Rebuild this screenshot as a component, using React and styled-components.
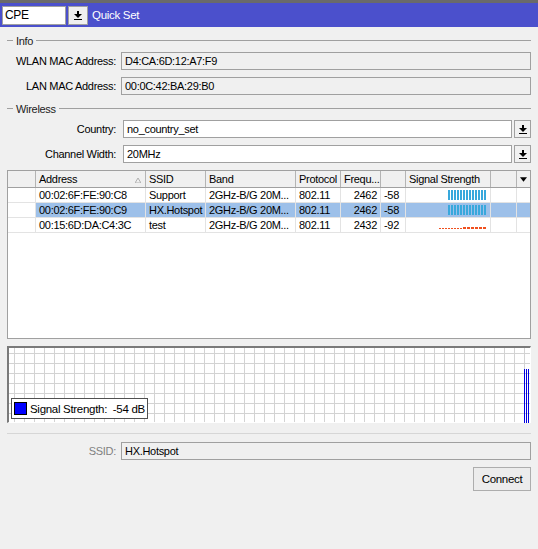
import React from 'react';
import styled, { createGlobalStyle } from 'styled-components';

const GlobalStyle = createGlobalStyle`
  html, body {
    margin: 0;
    padding: 0;
    background: #f0f0f0;
    min-height: 100%;
  }
  body {
    font-family: "Liberation Sans", Arial, sans-serif;
    font-size: 11px;
    letter-spacing: -0.3px;
    color: #000;
  }
`;

const Window = styled.div`
  width: 538px;
  height: 549px;
  background: #f0f0f0;
  display: flex;
  flex-direction: column;
`;

const TopBar = styled.div`
  height: 24px;
  border-top: 3px solid #6a6a6a;
  background: #4b50cc;
  display: flex;
  align-items: center;
  padding-left: 2px;
  gap: 2px;
`;

const ModeSelect = styled.div`
  box-sizing: border-box;
  width: 64px;
  height: 19px;
  background: #fff;
  border: 1px solid #a0a0a0;
  padding-left: 2px;
  line-height: 17px;
  font-size: 12px;
`;

const DropButton = styled.div`
  box-sizing: border-box;
  width: ${(p) => p.$w || 20}px;
  height: ${(p) => p.$h || 19}px;
  background: #f0f0f0;
  border: 1px solid #a0a0a0;
  display: flex;
  align-items: center;
  justify-content: center;
  flex-shrink: 0;
`;

const Title = styled.div`
  color: #fff;
  margin-left: 2px;
  font-size: 11.5px;
`;

const Body = styled.div`
  padding: 0 7px;
  display: flex;
  flex-direction: column;
`;

const GroupHeader = styled.div`
  margin-top: ${(p) => p.$mt}px;
  height: 13px;
  display: flex;
  align-items: center;
  gap: 3px;
  color: #222;
  &::before {
    content: '';
    width: 6px;
    height: 1px;
    background: #a0a0a0;
  }
  &::after {
    content: '';
    flex: 1;
    height: 1px;
    background: #a0a0a0;
  }
`;

const FormRow = styled.div`
  margin-top: ${(p) => p.$mt}px;
  height: 18px;
  display: grid;
  grid-template-columns: 114px 1fr ${(p) => (p.$withButton ? '17px' : '')};
  column-gap: ${(p) => (p.$withButton ? '2px' : '0')};
  align-items: center;
`;

const Label = styled.div`
  text-align: right;
  padding-right: 5px;
  color: ${(p) => (p.$disabled ? '#808080' : '#000')};
  white-space: nowrap;
`;

const Field = styled.div`
  box-sizing: border-box;
  height: 18px;
  line-height: 16px;
  border: 1px solid #a0a0a0;
  background: ${(p) => (p.$editable ? '#fff' : '#f0f0f0')};
  padding-left: 3px;
  white-space: nowrap;
  overflow: hidden;
`;

const Table = styled.div`
  margin-top: 7px;
  height: 169px;
  box-sizing: border-box;
  border: 1px solid #a0a0a0;
  background: #fff;
  display: flex;
  flex-direction: column;
`;

const COLS = '28px 110px 60px 90px 45px 40px 25px 85px 26px 1fr';

const HeadRow = styled.div`
  display: grid;
  grid-template-columns: ${COLS};
  height: 17px;
  line-height: 16px;
  background: #f0f0f0;
  border-bottom: 1px solid #a0a0a0;
  box-sizing: border-box;
`;

const HeadCell = styled.div`
  position: relative;
  padding: 0 3px;
  border-right: 1px solid #b4b4b4;
  white-space: nowrap;
  overflow: hidden;
  display: flex;
  align-items: center;
  justify-content: ${(p) => (p.$center ? 'center' : 'flex-start')};
  &:last-child {
    border-right: none;
  }
`;

const SortMark = styled.svg`
  position: absolute;
  right: 4px;
  top: 7px;
`;

const DataRow = styled.div`
  display: grid;
  grid-template-columns: ${COLS};
  height: 15px;
  line-height: 14px;
  box-sizing: border-box;
  border-bottom: 1px solid #e3e3e3;
`;

const DataCell = styled.div`
  padding: 0 3px;
  border-right: 1px solid #e3e3e3;
  background: ${(p) => (p.$selected ? '#9dc0e9' : '#fff')};
  white-space: nowrap;
  overflow: hidden;
  text-align: ${(p) => p.$align || 'left'};
  display: flex;
  align-items: center;
  justify-content: ${(p) => (p.$align === 'right' ? 'flex-end' : 'flex-start')};
  &:last-child {
    border-right: none;
  }
`;

const Graph = styled.div`
  position: relative;
  margin-top: 7px;
  height: 77px;
  box-sizing: border-box;
  border-top: 2px solid #7a7a7a;
  border-left: 2px solid #7a7a7a;
  border-right: 1px solid #fff;
  border-bottom: 1px solid #fff;
  background-color: #fff;
  background-image: linear-gradient(to right, #d3d3d3 1px, transparent 1px),
    linear-gradient(to bottom, #d3d3d3 1px, transparent 1px);
  background-size: 10px 10px;
  background-position: 5px 5px;
`;

const Legend = styled.div`
  position: absolute;
  left: 2px;
  top: 50px;
  width: 137px;
  height: 21px;
  box-sizing: border-box;
  border: 1px solid #505050;
  background: #fff;
  display: flex;
  align-items: center;
  padding-left: 2px;
  gap: 3px;
  font-size: 11.5px;
`;

const Swatch = styled.div`
  width: 13px;
  height: 13px;
  box-sizing: border-box;
  background: #0000ff;
  border: 1px solid #000;
`;

const Bars = styled.svg`
  position: absolute;
  right: 0;
  top: 21px;
`;

const Separator = styled.div`
  margin-top: 10px;
  height: 1px;
  background: #d6d6d6;
`;

const ButtonRow = styled.div`
  margin-top: 7px;
  display: flex;
  justify-content: flex-end;
`;

const Button = styled.div`
  box-sizing: border-box;
  width: 58px;
  height: 24px;
  border: 1px solid #adadad;
  background: #ececec;
  display: flex;
  align-items: center;
  justify-content: center;
  font-size: 11.5px;
`;

const DownIcon = () => (
  <svg width="8" height="9" viewBox="0 0 8 9">
    <rect x="3" y="0" width="2" height="3" fill="#000" />
    <polygon points="0,3 8,3 4,7" fill="#000" />
    <rect x="0" y="8" width="8" height="1" fill="#000" />
  </svg>
);

const SignalBars = () => (
  <svg width="40" height="10" viewBox="0 0 40 10">
    {Array.from({ length: 13 }).map((_, i) => (
      <rect key={i} x={i * 3 + 1} y="0" width="2" height="10" fill="#38a8dc" />
    ))}
  </svg>
);

const WeakSignal = () => (
  <svg width="48" height="10" viewBox="0 0 48 10">
    {Array.from({ length: 8 }).map((_, i) => (
      <rect key={`a${i}`} x={i * 3} y="8" width="2" height="1" fill="#f0501e" />
    ))}
    {Array.from({ length: 6 }).map((_, i) => (
      <rect key={`b${i}`} x={24 + i * 4} y="7" width="3" height="2" fill="#f0501e" />
    ))}
  </svg>
);

const rows = [
  { addr: '00:02:6F:FE:90:C8', ssid: 'Support', freq: '2462', sig: '-58', strong: true },
  { addr: '00:02:6F:FE:90:C9', ssid: 'HX.Hotspot', freq: '2462', sig: '-58', strong: true, selected: true },
  { addr: '00:15:6D:DA:C4:3C', ssid: 'test', freq: '2432', sig: '-92', strong: false },
];

const App = () => (
  <Window>
    <GlobalStyle />
    <TopBar>
      <ModeSelect>CPE</ModeSelect>
      <DropButton>
        <DownIcon />
      </DropButton>
      <Title>Quick Set</Title>
    </TopBar>
    <Body>
      <GroupHeader $mt={7}>Info</GroupHeader>
      <FormRow $mt={5}>
        <Label>WLAN MAC Address:</Label>
        <Field>D4:CA:6D:12:A7:F9</Field>
      </FormRow>
      <FormRow $mt={7}>
        <Label>LAN MAC Address:</Label>
        <Field>00:0C:42:BA:29:B0</Field>
      </FormRow>
      <GroupHeader $mt={7}>Wireless</GroupHeader>
      <FormRow $mt={5} $withButton>
        <Label>Country:</Label>
        <Field $editable>no_country_set</Field>
        <DropButton $w={17} $h={18}>
          <DownIcon />
        </DropButton>
      </FormRow>
      <FormRow $mt={7} $withButton>
        <Label>Channel Width:</Label>
        <Field $editable>20MHz</Field>
        <DropButton $w={17} $h={18}>
          <DownIcon />
        </DropButton>
      </FormRow>

      <Table>
        <HeadRow>
          <HeadCell />
          <HeadCell>
            Address
            <SortMark width="6" height="5" viewBox="0 0 6 5">
              <polygon points="3,0 6,5 0,5" fill="none" stroke="#b0b0b0" strokeWidth="1" />
            </SortMark>
          </HeadCell>
          <HeadCell>SSID</HeadCell>
          <HeadCell>Band</HeadCell>
          <HeadCell>Protocol</HeadCell>
          <HeadCell>Frequ...</HeadCell>
          <HeadCell />
          <HeadCell>Signal Strength</HeadCell>
          <HeadCell />
          <HeadCell $center>
            <svg width="8" height="5" viewBox="0 0 8 5">
              <polygon points="0,0 8,0 4,5" fill="#000" />
            </svg>
          </HeadCell>
        </HeadRow>
        {rows.map((r) => (
          <DataRow key={r.addr}>
            <DataCell />
            <DataCell $selected={r.selected}>{r.addr}</DataCell>
            <DataCell $selected={r.selected}>{r.ssid}</DataCell>
            <DataCell $selected={r.selected}>2GHz-B/G 20M...</DataCell>
            <DataCell $selected={r.selected}>802.11</DataCell>
            <DataCell $selected={r.selected} $align="right">
              {r.freq}
            </DataCell>
            <DataCell $selected={r.selected}>{r.sig}</DataCell>
            <DataCell $selected={r.selected} $align="right">
              {r.strong ? <SignalBars /> : <WeakSignal />}
            </DataCell>
            <DataCell $selected={r.selected} />
            <DataCell $selected={r.selected} />
          </DataRow>
        ))}
      </Table>

      <Graph>
        <Legend>
          <Swatch />
          <span>Signal Strength:&nbsp; -54 dB</span>
        </Legend>
        <Bars width="6" height="54" viewBox="0 0 6 54">
          <rect x="0" y="0" width="1" height="54" fill="#0000e0" />
          <rect x="2" y="0" width="1" height="54" fill="#0000e0" />
          <rect x="4" y="0" width="1" height="54" fill="#0000e0" />
        </Bars>
      </Graph>

      <Separator />
      <FormRow $mt={8}>
        <Label $disabled>SSID:</Label>
        <Field>HX.Hotspot</Field>
      </FormRow>
      <ButtonRow>
        <Button>Connect</Button>
      </ButtonRow>
    </Body>
  </Window>
);

export default App;
